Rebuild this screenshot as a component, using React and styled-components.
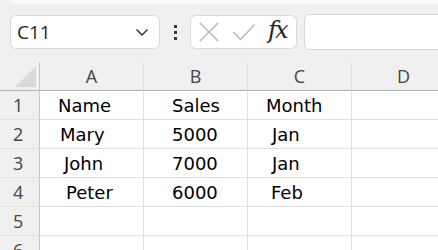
import React from 'react';
import styled, { createGlobalStyle } from 'styled-components';

const GlobalStyle = createGlobalStyle`
  html, body {
    margin: 0;
    padding: 0;
    background: #ffffff;
    overflow: hidden;
  }
  body {
    font-family: "DejaVu Sans", sans-serif;
  }
`;

const Page = styled.div`
  width: 438px;
  height: 250px;
  overflow: hidden;
  background: #f0f0f0;
`;

const Ribbon = styled.div`
  height: 4px;
  margin-left: 10px;
  background: #fbfbfb;
  border-bottom-left-radius: 8px;
`;

const FormulaBar = styled.div`
  display: flex;
  align-items: center;
  gap: 7px;
  height: 58px;
  padding: 0 0 2px 10px;
  box-sizing: border-box;
`;

const NameBox = styled.div`
  display: flex;
  align-items: center;
  justify-content: space-between;
  width: 150px;
  height: 34px;
  box-sizing: border-box;
  padding: 0 10px 0 6px;
  background: #ffffff;
  border: 1px solid #dadada;
  border-radius: 6px;
  font-family: "Open Sans", "Noto Sans", sans-serif;
  font-size: 19px;
  color: #1f1f1f;
`;

const Dots = styled.div`
  display: flex;
  flex-direction: column;
  gap: 3px;
  width: 16px;
  align-items: center;

  span {
    width: 3px;
    height: 3px;
    background: #3a3a3a;
  }
`;

const ButtonGroup = styled.div`
  display: flex;
  align-items: center;
  gap: 12px;
  width: 107px;
  height: 34px;
  box-sizing: border-box;
  padding: 0 6px 0 7px;
  background: #ffffff;
  border: 1px solid #dadada;
  border-radius: 6px;
`;

const Fx = styled.span`
  font-family: "DejaVu Serif", "Liberation Serif", serif;
  font-style: italic;
  font-size: 24px;
  color: #262626;
  letter-spacing: -2px;
  margin-top: -4px;
`;

const FormulaInput = styled.div`
  flex: 1;
  height: 34px;
  margin-right: -8px;
  background: #ffffff;
  border: 1px solid #dadada;
  border-radius: 6px;
`;

const Sheet = styled.div`
  display: grid;
  grid-template-columns: 40px repeat(4, 104px);
  grid-auto-rows: 29px;
  width: 460px;
`;

const Corner = styled.div`
  position: relative;
  background: #f0f0f0;
  border-right: 1px solid #c8c8c8;
  border-bottom: 1px solid #b4b4b4;
  box-sizing: border-box;

  &::after {
    content: '';
    position: absolute;
    right: 3px;
    bottom: 3px;
    width: 0;
    height: 0;
    border-left: 21px solid transparent;
    border-bottom: 21px solid #d9d9d9;
  }
`;

const ColHead = styled.div`
  display: flex;
  align-items: center;
  justify-content: center;
  background: #f0f0f0;
  border-right: 1px solid #e0e0e0;
  border-bottom: 1px solid #b4b4b4;
  box-sizing: border-box;
  font-family: "Open Sans", "Noto Sans", sans-serif;
  font-size: 18px;
  color: #444444;
`;

const RowHead = styled.div`
  display: flex;
  align-items: center;
  padding-left: 13px;
  background: #f0f0f0;
  border-right: 1px solid #c8c8c8;
  border-bottom: 1px solid #e0e0e0;
  box-sizing: border-box;
  font-family: "Open Sans", "Noto Sans", sans-serif;
  font-size: 18px;
  color: #444444;
`;

const Cell = styled.div`
  display: flex;
  align-items: center;
  padding-left: ${p => p.$indent || 0}px;
  background: #ffffff;
  border-right: 1px solid #e0e0e0;
  border-bottom: 1px solid #e0e0e0;
  box-sizing: border-box;
  font-size: 18px;
  color: #000000;
  white-space: nowrap;
`;

const columns = ['A', 'B', 'C', 'D'];

const rows = [
  [['Name', 18], ['Sales', 28], ['Month', 18], ['', 0]],
  [['Mary', 20], ['5000', 28], ['Jan', 24], ['', 0]],
  [['John', 24], ['7000', 28], ['Jan', 24], ['', 0]],
  [['Peter', 26], ['6000', 28], ['Feb', 23], ['', 0]],
  [['', 0], ['', 0], ['', 0], ['', 0]],
  [['', 0], ['', 0], ['', 0], ['', 0]],
];

const Chevron = () => (
  <svg width="14" height="9" viewBox="0 0 14 9" fill="none">
    <path d="M1.5 1.5 L7 7 L12.5 1.5" stroke="#2b2b2b" strokeWidth="1.4" />
  </svg>
);

const Cancel = () => (
  <svg width="22" height="22" viewBox="0 0 22 22" fill="none">
    <path d="M2 2 L20 20 M20 2 L2 20" stroke="#b4b4b4" strokeWidth="1.3" />
  </svg>
);

const Enter = () => (
  <svg width="24" height="20" viewBox="0 0 24 20" fill="none">
    <path d="M1.5 10 L8.5 17.5 L22.5 2.5" stroke="#b4b4b4" strokeWidth="1.3" />
  </svg>
);

const App = () => {
  return (
    <Page>
      <GlobalStyle />
      <Ribbon />
      <FormulaBar>
        <NameBox>
          <span>C11</span>
          <Chevron />
        </NameBox>
        <Dots>
          <span />
          <span />
          <span />
        </Dots>
        <ButtonGroup>
          <Cancel />
          <Enter />
          <Fx>fx</Fx>
        </ButtonGroup>
        <FormulaInput />
      </FormulaBar>
      <Sheet>
        <Corner />
        {columns.map(c => (
          <ColHead key={c}>{c}</ColHead>
        ))}
        {rows.map((row, i) => (
          <React.Fragment key={i}>
            <RowHead>{i + 1}</RowHead>
            {row.map(([text, indent], j) => (
              <Cell key={j} $indent={indent}>{text}</Cell>
            ))}
          </React.Fragment>
        ))}
      </Sheet>
    </Page>
  );
};

export default App;
